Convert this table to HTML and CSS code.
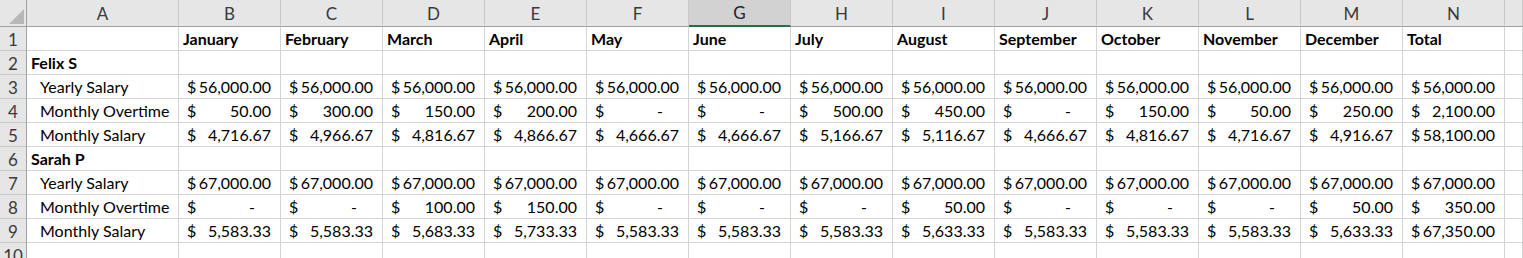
FILE: index.html
```
<!DOCTYPE html>
<html>
<head>
	<title>Salaries</title>
	<link rel="stylesheet" href="styles.css">
</head>
<body>
<div class="sheet">
	<!-- column headers -->
	<div class="corner"><svg width="18" height="18" viewBox="0 0 18 18"><polygon points="17,2 17,17 2,17" fill="#b7b7b7"/></svg></div>
	<div class="ch">A</div><div class="ch">B</div><div class="ch">C</div><div class="ch">D</div>
	<div class="ch">E</div><div class="ch">F</div><div class="ch sel">G</div><div class="ch">H</div>
	<div class="ch">I</div><div class="ch">J</div><div class="ch">K</div><div class="ch">L</div>
	<div class="ch">M</div><div class="ch">N</div><div class="ch"></div>

	<!-- row 1 -->
	<div class="rh">1</div><div class="cell"></div>
	<div class="cell b">January</div><div class="cell b">February</div><div class="cell b">March</div>
	<div class="cell b">April</div><div class="cell b">May</div><div class="cell b">June</div>
	<div class="cell b">July</div><div class="cell b">August</div><div class="cell b">September</div>
	<div class="cell b">October</div><div class="cell b">November</div><div class="cell b">December</div>
	<div class="cell b">Total</div><div class="cell"></div>

	<!-- row 2 -->
	<div class="rh">2</div><div class="cell b">Felix S</div>
	<div class="cell"></div><div class="cell"></div><div class="cell"></div><div class="cell"></div>
	<div class="cell"></div><div class="cell"></div><div class="cell"></div><div class="cell"></div>
	<div class="cell"></div><div class="cell"></div><div class="cell"></div><div class="cell"></div>
	<div class="cell"></div><div class="cell"></div>

	<!-- row 3 -->
	<div class="rh">3</div><div class="cell ind">Yearly Salary</div>
	<div class="cell acc"><span>$</span><span>56,000.00</span></div>
	<div class="cell acc"><span>$</span><span>56,000.00</span></div>
	<div class="cell acc"><span>$</span><span>56,000.00</span></div>
	<div class="cell acc"><span>$</span><span>56,000.00</span></div>
	<div class="cell acc"><span>$</span><span>56,000.00</span></div>
	<div class="cell acc"><span>$</span><span>56,000.00</span></div>
	<div class="cell acc"><span>$</span><span>56,000.00</span></div>
	<div class="cell acc"><span>$</span><span>56,000.00</span></div>
	<div class="cell acc"><span>$</span><span>56,000.00</span></div>
	<div class="cell acc"><span>$</span><span>56,000.00</span></div>
	<div class="cell acc"><span>$</span><span>56,000.00</span></div>
	<div class="cell acc"><span>$</span><span>56,000.00</span></div>
	<div class="cell acc"><span>$</span><span>56,000.00</span></div>
	<div class="cell"></div>

	<!-- row 4 -->
	<div class="rh">4</div><div class="cell ind">Monthly Overtime</div>
	<div class="cell acc"><span>$</span><span>50.00</span></div>
	<div class="cell acc"><span>$</span><span>300.00</span></div>
	<div class="cell acc"><span>$</span><span>150.00</span></div>
	<div class="cell acc"><span>$</span><span>200.00</span></div>
	<div class="cell acc"><span>$</span><span class="dash">-</span></div>
	<div class="cell acc"><span>$</span><span class="dash">-</span></div>
	<div class="cell acc"><span>$</span><span>500.00</span></div>
	<div class="cell acc"><span>$</span><span>450.00</span></div>
	<div class="cell acc"><span>$</span><span class="dash">-</span></div>
	<div class="cell acc"><span>$</span><span>150.00</span></div>
	<div class="cell acc"><span>$</span><span>50.00</span></div>
	<div class="cell acc"><span>$</span><span>250.00</span></div>
	<div class="cell acc"><span>$</span><span>2,100.00</span></div>
	<div class="cell"></div>

	<!-- row 5 -->
	<div class="rh">5</div><div class="cell ind">Monthly Salary</div>
	<div class="cell acc"><span>$</span><span>4,716.67</span></div>
	<div class="cell acc"><span>$</span><span>4,966.67</span></div>
	<div class="cell acc"><span>$</span><span>4,816.67</span></div>
	<div class="cell acc"><span>$</span><span>4,866.67</span></div>
	<div class="cell acc"><span>$</span><span>4,666.67</span></div>
	<div class="cell acc"><span>$</span><span>4,666.67</span></div>
	<div class="cell acc"><span>$</span><span>5,166.67</span></div>
	<div class="cell acc"><span>$</span><span>5,116.67</span></div>
	<div class="cell acc"><span>$</span><span>4,666.67</span></div>
	<div class="cell acc"><span>$</span><span>4,816.67</span></div>
	<div class="cell acc"><span>$</span><span>4,716.67</span></div>
	<div class="cell acc"><span>$</span><span>4,916.67</span></div>
	<div class="cell acc"><span>$</span><span>58,100.00</span></div>
	<div class="cell"></div>

	<!-- row 6 -->
	<div class="rh">6</div><div class="cell b">Sarah P</div>
	<div class="cell"></div><div class="cell"></div><div class="cell"></div><div class="cell"></div>
	<div class="cell"></div><div class="cell"></div><div class="cell"></div><div class="cell"></div>
	<div class="cell"></div><div class="cell"></div><div class="cell"></div><div class="cell"></div>
	<div class="cell"></div><div class="cell"></div>

	<!-- row 7 -->
	<div class="rh">7</div><div class="cell ind">Yearly Salary</div>
	<div class="cell acc"><span>$</span><span>67,000.00</span></div>
	<div class="cell acc"><span>$</span><span>67,000.00</span></div>
	<div class="cell acc"><span>$</span><span>67,000.00</span></div>
	<div class="cell acc"><span>$</span><span>67,000.00</span></div>
	<div class="cell acc"><span>$</span><span>67,000.00</span></div>
	<div class="cell acc"><span>$</span><span>67,000.00</span></div>
	<div class="cell acc"><span>$</span><span>67,000.00</span></div>
	<div class="cell acc"><span>$</span><span>67,000.00</span></div>
	<div class="cell acc"><span>$</span><span>67,000.00</span></div>
	<div class="cell acc"><span>$</span><span>67,000.00</span></div>
	<div class="cell acc"><span>$</span><span>67,000.00</span></div>
	<div class="cell acc"><span>$</span><span>67,000.00</span></div>
	<div class="cell acc"><span>$</span><span>67,000.00</span></div>
	<div class="cell"></div>

	<!-- row 8 -->
	<div class="rh">8</div><div class="cell ind">Monthly Overtime</div>
	<div class="cell acc"><span>$</span><span class="dash">-</span></div>
	<div class="cell acc"><span>$</span><span class="dash">-</span></div>
	<div class="cell acc"><span>$</span><span>100.00</span></div>
	<div class="cell acc"><span>$</span><span>150.00</span></div>
	<div class="cell acc"><span>$</span><span class="dash">-</span></div>
	<div class="cell acc"><span>$</span><span class="dash">-</span></div>
	<div class="cell acc"><span>$</span><span class="dash">-</span></div>
	<div class="cell acc"><span>$</span><span>50.00</span></div>
	<div class="cell acc"><span>$</span><span class="dash">-</span></div>
	<div class="cell acc"><span>$</span><span class="dash">-</span></div>
	<div class="cell acc"><span>$</span><span class="dash">-</span></div>
	<div class="cell acc"><span>$</span><span>50.00</span></div>
	<div class="cell acc"><span>$</span><span>350.00</span></div>
	<div class="cell"></div>

	<!-- row 9 -->
	<div class="rh">9</div><div class="cell ind">Monthly Salary</div>
	<div class="cell acc"><span>$</span><span>5,583.33</span></div>
	<div class="cell acc"><span>$</span><span>5,583.33</span></div>
	<div class="cell acc"><span>$</span><span>5,683.33</span></div>
	<div class="cell acc"><span>$</span><span>5,733.33</span></div>
	<div class="cell acc"><span>$</span><span>5,583.33</span></div>
	<div class="cell acc"><span>$</span><span>5,583.33</span></div>
	<div class="cell acc"><span>$</span><span>5,583.33</span></div>
	<div class="cell acc"><span>$</span><span>5,633.33</span></div>
	<div class="cell acc"><span>$</span><span>5,583.33</span></div>
	<div class="cell acc"><span>$</span><span>5,583.33</span></div>
	<div class="cell acc"><span>$</span><span>5,583.33</span></div>
	<div class="cell acc"><span>$</span><span>5,633.33</span></div>
	<div class="cell acc"><span>$</span><span>67,350.00</span></div>
	<div class="cell"></div>

	<!-- row 10 -->
	<div class="rh">10</div><div class="cell"></div>
	<div class="cell"></div><div class="cell"></div><div class="cell"></div><div class="cell"></div>
	<div class="cell"></div><div class="cell"></div><div class="cell"></div><div class="cell"></div>
	<div class="cell"></div><div class="cell"></div><div class="cell"></div><div class="cell"></div>
	<div class="cell"></div><div class="cell"></div>
</div>
</body>
</html>
```
FILE: styles.css
```
html, body {margin:0; padding:0; background:#fff;}
body {font-family: Lato, "Liberation Sans", sans-serif; font-size:16px; color:#000; overflow:hidden;}

.sheet {display:grid; grid-template-columns: 27px 152px repeat(13, 102px) 1fr;
	grid-template-rows: 27px repeat(9, 24px) 24px;}

.corner, .ch, .rh {background:#e6e6e6; color:#3a3a3a; box-sizing:border-box;}
.corner {border-right:1px solid #9f9f9f; border-bottom:1px solid #9f9f9f;
	display:flex; align-items:flex-end; justify-content:flex-end; padding:0 1px 1px 0;}
.ch {border-right:1px solid #c8c8c8; border-bottom:1px solid #9f9f9f;
	display:flex; align-items:center; justify-content:center; font-size:17px;}
.ch.sel {background:#d2d2d2; color:#222; border-bottom:2px solid #217346;}
.rh {border-right:1px solid #9f9f9f; border-bottom:1px solid #c8c8c8;
	display:flex; align-items:flex-end; justify-content:center; font-size:17px;
	padding-bottom:0;}

.cell {border-right:1px solid #d4d4d4; border-bottom:1px solid #d4d4d4; box-sizing:border-box;
	display:flex; align-items:flex-end; padding:0 3px 2px 4px; white-space:nowrap; overflow:hidden;}
.b {font-weight:bold;}
.ind {padding-left:13px;}
.acc {justify-content:space-between; padding:0 9px 2px 8px;}
.dash {padding-right:16px;}
```
